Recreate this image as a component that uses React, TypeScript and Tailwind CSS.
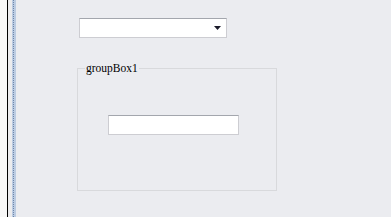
export default function App() {
  return (
    <div className="flex h-[217px] w-[391px] overflow-hidden bg-[#ebecf0]">
      <div className="w-[7px] shrink-0 bg-[#f7f7f7]" />
      <div className="w-px shrink-0 bg-[#000000]" />
      <div className="w-[4px] shrink-0 bg-[#ececee]" />
      <div className="flex w-[4px] shrink-0 bg-[#bccce2]">
        <div className="ml-px w-px border-l border-dotted border-[#6e86aa]" />
      </div>
      <div className="flex flex-1 flex-col pl-[63px] pt-[18px]">
        <div className="flex h-[20px] w-[148px] items-center justify-end border border-[#cdcdd2] border-t-[#a3a6ad] bg-white pr-[5px]">
          <svg width="7" height="4" viewBox="0 0 7 4">
            <path d="M0 0H7L3.5 4Z" fill="#1a1a2a" />
          </svg>
        </div>
        <fieldset className="ml-[-2px] mt-[24px] h-[129px] w-[200px] border border-[#d8d9dc] px-[7px]">
          <legend
            className="px-px text-[11.5px] leading-[12px] text-[#000000]"
            style={{ fontFamily: '"Liberation Serif", serif' }}
          >
            groupBox1
          </legend>
          <div className="ml-[23px] mt-[41px] h-[20px] w-[131px] border border-[#cdcdd2] border-t-[#a3a6ad] bg-white" />
        </fieldset>
      </div>
    </div>
  );
}
